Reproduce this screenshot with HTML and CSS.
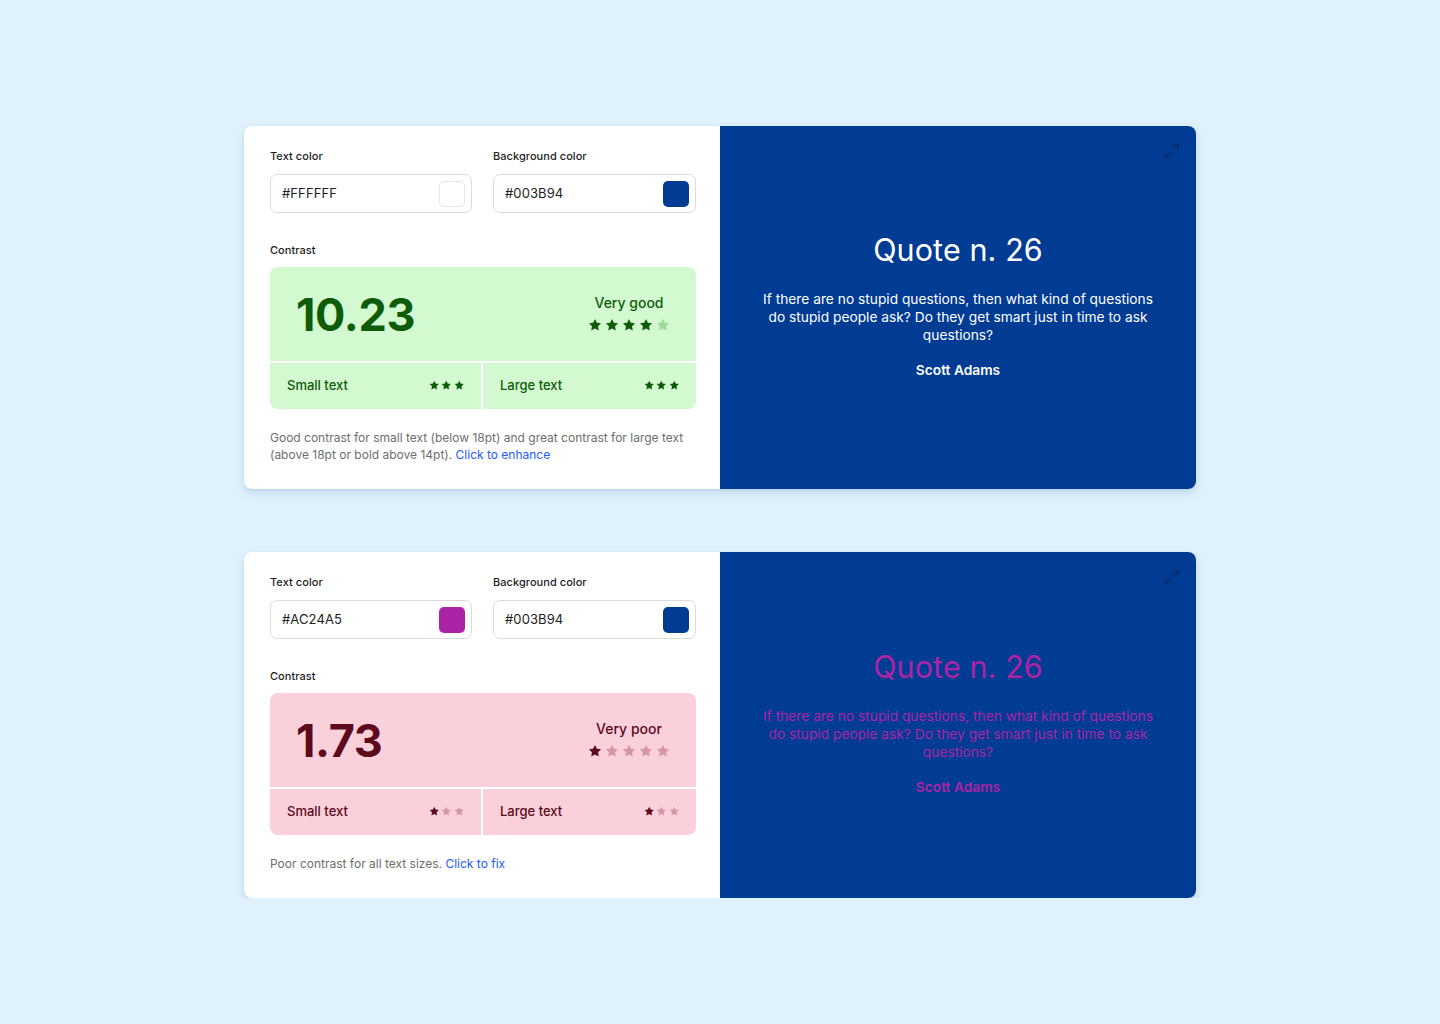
FILE: index.html
```html
<!DOCTYPE html>
<html lang="en">
<head>
<meta charset="utf-8">
<title>Contrast checker</title>
<link rel="stylesheet" href="styles.css">
</head>
<body>
<svg width="0" height="0" class="defs">
  <defs>
    <symbol id="star" viewBox="0 0 24 24">
      <path d="M12 1.6l3.2 6.6 7.2 1-5.2 5.1 1.3 7.2L12 18.1l-6.5 3.4 1.3-7.2-5.2-5.1 7.2-1z"/>
    </symbol>
    <symbol id="expand" viewBox="0 0 24 24">
      <polyline points="15 3 21 3 21 9"/>
      <polyline points="9 21 3 21 3 15"/>
      <line x1="21" y1="3" x2="14" y2="10"/>
      <line x1="3" y1="21" x2="10" y2="14"/>
    </symbol>
  </defs>
</svg>

<main class="page">
  <section class="card card-good">
    <div class="controls">
      <div class="fields">
        <div class="field">
          <label class="label">Text color</label>
          <div class="input">
            <span class="hex">#FFFFFF</span>
            <span class="swatch swatch-white"></span>
          </div>
        </div>
        <div class="field">
          <label class="label">Background color</label>
          <div class="input">
            <span class="hex">#003B94</span>
            <span class="swatch swatch-blue"></span>
          </div>
        </div>
      </div>

      <div class="label label-contrast">Contrast</div>
      <div class="score">
        <div class="score-top">
          <span class="ratio">10.23</span>
          <div class="rating">
            <span class="rating-name">Very good</span>
            <span class="stars stars-big">
              <svg class="on"><use href="#star"/></svg>
              <svg class="on"><use href="#star"/></svg>
              <svg class="on"><use href="#star"/></svg>
              <svg class="on"><use href="#star"/></svg>
              <svg class="off"><use href="#star"/></svg>
            </span>
          </div>
        </div>
        <div class="score-bottom">
          <div class="cell">
            <span>Small text</span>
            <span class="stars stars-small">
              <svg class="on"><use href="#star"/></svg>
              <svg class="on"><use href="#star"/></svg>
              <svg class="on"><use href="#star"/></svg>
            </span>
          </div>
          <div class="cell">
            <span>Large text</span>
            <span class="stars stars-small">
              <svg class="on"><use href="#star"/></svg>
              <svg class="on"><use href="#star"/></svg>
              <svg class="on"><use href="#star"/></svg>
            </span>
          </div>
        </div>
      </div>

      <p class="note">Good contrast for small text (below 18pt) and great contrast for large text (above 18pt or bold above 14pt). <a href="#" class="link">Click to enhance</a></p>
    </div>

    <div class="preview preview-white">
      <svg class="expand"><use href="#expand"/></svg>
      <h2 class="quote-title">Quote n. 26</h2>
      <p class="quote-text">If there are no stupid questions, then what kind of questions do stupid people ask? Do they get smart just in time to ask questions?</p>
      <p class="quote-author">Scott Adams</p>
    </div>
  </section>

  <section class="card card-poor">
    <div class="controls">
      <div class="fields">
        <div class="field">
          <label class="label">Text color</label>
          <div class="input">
            <span class="hex">#AC24A5</span>
            <span class="swatch swatch-magenta"></span>
          </div>
        </div>
        <div class="field">
          <label class="label">Background color</label>
          <div class="input">
            <span class="hex">#003B94</span>
            <span class="swatch swatch-blue"></span>
          </div>
        </div>
      </div>

      <div class="label label-contrast">Contrast</div>
      <div class="score">
        <div class="score-top">
          <span class="ratio">1.73</span>
          <div class="rating">
            <span class="rating-name">Very poor</span>
            <span class="stars stars-big">
              <svg class="on"><use href="#star"/></svg>
              <svg class="off"><use href="#star"/></svg>
              <svg class="off"><use href="#star"/></svg>
              <svg class="off"><use href="#star"/></svg>
              <svg class="off"><use href="#star"/></svg>
            </span>
          </div>
        </div>
        <div class="score-bottom">
          <div class="cell">
            <span>Small text</span>
            <span class="stars stars-small">
              <svg class="on"><use href="#star"/></svg>
              <svg class="off"><use href="#star"/></svg>
              <svg class="off"><use href="#star"/></svg>
            </span>
          </div>
          <div class="cell">
            <span>Large text</span>
            <span class="stars stars-small">
              <svg class="on"><use href="#star"/></svg>
              <svg class="off"><use href="#star"/></svg>
              <svg class="off"><use href="#star"/></svg>
            </span>
          </div>
        </div>
      </div>

      <p class="note">Poor contrast for all text sizes. <a href="#" class="link">Click to fix</a></p>
    </div>

    <div class="preview preview-magenta">
      <svg class="expand"><use href="#expand"/></svg>
      <h2 class="quote-title">Quote n. 26</h2>
      <p class="quote-text">If there are no stupid questions, then what kind of questions do stupid people ask? Do they get smart just in time to ask questions?</p>
      <p class="quote-author">Scott Adams</p>
    </div>
  </section>
</main>
</body>
</html>
```

FILE: styles.css
```css
* {
  box-sizing: border-box;
}

html, body {
  margin: 0;
  padding: 0;
}

body {
  background: #dff1fd;
  font-family: Inter, "Noto Sans", "Liberation Sans", sans-serif;
  color: #1f1f1f;
  -webkit-font-smoothing: antialiased;
}

.defs {
  position: absolute;
  width: 0;
  height: 0;
  overflow: hidden;
}

.page {
  display: flex;
  flex-direction: column;
  align-items: center;
  gap: 63px;
  padding-top: 126px;
}

/* Card: controls on the left, live preview on the right */
.card {
  display: grid;
  grid-template-columns: 476px 476px;
  width: 952px;
  background: #fff;
  border-radius: 8px;
  overflow: hidden;
  box-shadow: 0 4px 10px rgba(40, 80, 120, 0.14), 0 1px 2px rgba(40, 80, 120, 0.08);
}

.controls {
  padding: 23px 24px 26px 26px;
}

.fields {
  display: grid;
  grid-template-columns: 202px 203px;
  gap: 21px;
}

.label {
  display: block;
  font-size: 11px;
  line-height: 14px;
  font-weight: 500;
  color: #1e1e1e;
  letter-spacing: 0.05px;
}

.input {
  display: flex;
  align-items: center;
  justify-content: space-between;
  height: 39px;
  margin-top: 11px;
  padding: 0 6px 1px 11px;
  border: 1px solid #dcdcdc;
  border-radius: 7px;
  background: #fff;
}

.input .swatch {
  margin-top: 1px;
}

.hex {
  font-size: 13px;
  color: #222;
  letter-spacing: 0.1px;
}

.swatch {
  width: 26px;
  height: 26px;
  border-radius: 5px;
}

.swatch-white {
  background: #fff;
  border: 1px solid #e6e6e6;
}

.swatch-blue {
  background: #003b94;
}

.swatch-magenta {
  background: #ac24a5;
}

.label-contrast {
  margin-top: 30px;
}

/* Contrast score box */
.score {
  display: flex;
  flex-direction: column;
  gap: 2px;
  margin-top: 10px;
  border-radius: 8px;
  overflow: hidden;
  background: #fff;
}

.score-top {
  display: flex;
  align-items: center;
  justify-content: space-between;
  height: 94px;
  padding: 0 26px;
}

.ratio {
  font-size: 45px;
  font-weight: 700;
  letter-spacing: -0.3px;
  line-height: 1;
}

.rating {
  display: flex;
  flex-direction: column;
  align-items: center;
  gap: 6px;
  margin-top: -2px;
}

.rating-name {
  font-size: 14px;
  font-weight: 500;
  line-height: 18px;
}

.stars {
  display: flex;
}

.stars svg {
  display: block;
}

.stars-big {
  gap: 3px;
}

.stars-big svg {
  width: 14px;
  height: 14px;
}

.stars-small {
  gap: 2px;
}

.stars-small svg {
  width: 10.5px;
  height: 10.5px;
}

.score-bottom {
  display: grid;
  grid-template-columns: 211px 1fr;
  gap: 2px;
  height: 46px;
}

.cell {
  display: flex;
  align-items: center;
  justify-content: space-between;
  padding: 0 17px 2px;
  font-size: 13px;
  font-weight: 500;
}

.card-good .score-top,
.card-good .cell {
  background: #d3f9d0;
  color: #0e5c0a;
}

.card-good .stars .on {
  fill: #0e5c0a;
}

.card-good .stars .off {
  fill: #a0d89c;
}

.card-poor .score-top,
.card-poor .cell {
  background: #fad0da;
  color: #5d0a1c;
}

.card-poor .stars .on {
  fill: #5d0a1c;
}

.card-poor .stars .off {
  fill: #d596a7;
}

.note {
  margin: 20px 0 0;
  font-size: 12px;
  line-height: 17px;
  color: #6e6e6e;
}

.link {
  color: #1a5cff;
  text-decoration: none;
}

/* Live preview */
.preview {
  position: relative;
  display: flex;
  flex-direction: column;
  align-items: center;
  justify-content: center;
  text-align: center;
  background: #003b94;
  padding: 0 36px 7px;
}

.preview-white {
  color: #fff;
}

.preview-magenta {
  color: #ac24a5;
}

.expand {
  position: absolute;
  top: 17px;
  right: 16px;
  width: 16px;
  height: 16px;
  fill: none;
  stroke: #0e2c66;
  stroke-width: 2;
  stroke-linecap: round;
  stroke-linejoin: round;
}

.quote-title {
  margin: 0;
  font-size: 30.5px;
  font-weight: 400;
  line-height: 40px;
  letter-spacing: 0.1px;
}

.quote-text {
  margin: 20px 0 0;
  max-width: 400px;
  font-size: 13.75px;
  line-height: 18px;
}

.quote-author {
  margin: 17px 0 0;
  font-size: 13.75px;
  font-weight: 600;
  line-height: 18px;
}
```
